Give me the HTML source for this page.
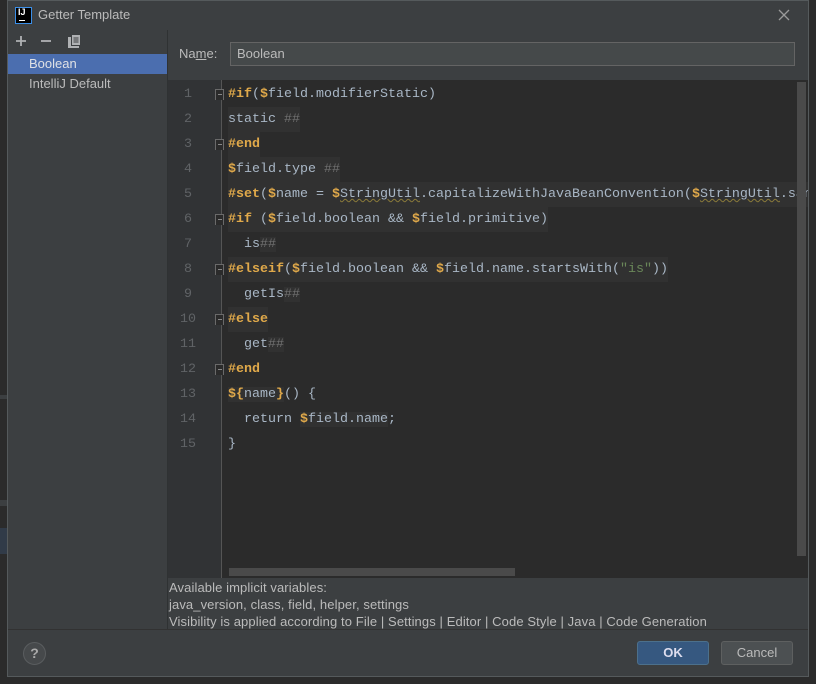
<!DOCTYPE html>
<html><head><meta charset="utf-8"><style>
*{margin:0;padding:0;box-sizing:border-box}
body{width:816px;height:684px;background:#2b2b2b;position:relative;overflow:hidden;font-family:"Liberation Sans",sans-serif;color:#bbbbbb}
.a{position:absolute}
.dlg{left:7px;top:0;width:802px;height:677px;background:#3c3f41;border:1px solid #555a5c}
.code{font-family:"Liberation Mono",monospace;font-size:13.33px;color:#a9b7c6;white-space:pre}
.ln{position:absolute;left:168px;width:40px;text-align:center;font-family:"Liberation Mono",monospace;font-size:13.33px;color:#606366;height:25px;line-height:25px}
.cl{position:absolute;left:228px;height:25px;line-height:25px}
.b{background:#313131}
.k{color:#e0a94a;font-weight:bold}
.d{color:#e0a94a;font-weight:bold}
.g{color:#707070}
.s{color:#6a8759}
.w{text-decoration:underline wavy #8a7a3a;text-decoration-thickness:1px}
.fold{position:absolute;left:215px;width:9px;height:11px;border:1px solid #6a6a6a;border-bottom:none;background:#2b2b2b}
.fold:after{content:"";position:absolute;left:2px;top:4px;width:4px;height:1px;background:#888}
.btn{position:absolute;top:641px;height:24px;width:72px;border-radius:3px;font-size:13px;text-align:center;line-height:22px}
</style></head><body>
<div class="a" style="left:0;top:395px;width:7px;height:4px;background:#3c3f41"></div>
<div class="a" style="left:0;top:500px;width:7px;height:6px;background:#3c3f41"></div>
<div class="a" style="left:0;top:528px;width:7px;height:26px;background:#313b48"></div>
<div class="a dlg"></div>
<!-- title -->
<div class="a" style="left:15px;top:7px;width:17px;height:17px;background:#000;border:1px solid #3b8fe8"></div>
<div class="a" style="left:18px;top:7px;font-size:9px;font-weight:bold;color:#fff">IJ</div>
<div class="a" style="left:19px;top:20px;width:6px;height:1px;background:#fff"></div>
<div class="a" style="left:38px;top:7px;font-size:13px;color:#bbbbbb">Getter Template</div>
<svg class="a" style="left:778px;top:9px" width="12" height="12"><path d="M1 1L11 11M11 1L1 11" stroke="#9a9a9a" stroke-width="1.3"/></svg>
<!-- left panel -->
<div class="a" style="left:167px;top:30px;width:1px;height:599px;background:#2f3233"></div>
<svg class="a" style="left:14px;top:34px" width="70" height="14"><path d="M2 7H12M7 2V12" stroke="#afb1b3" stroke-width="1.8"/><path d="M27 7H37" stroke="#afb1b3" stroke-width="1.8"/><path d="M54 3H57V12H65V14H54Z" fill="#afb1b3"/><rect x="58" y="1" width="8" height="10" fill="#afb1b3"/><path d="M59.5 4H64.5M59.5 6H64.5M59.5 8H64.5" stroke="#3c3f41"/></svg>
<div class="a" style="left:8px;top:54px;width:159px;height:20px;background:#4b6eaf"></div>
<div class="a" style="left:29px;top:56px;font-size:13px;color:#dfe1e5">Boolean</div>
<div class="a" style="left:29px;top:76px;font-size:13px;color:#bbbbbb">IntelliJ Default</div>
<!-- name -->
<div class="a" style="left:179px;top:46px;font-size:13px;color:#bbbbbb">Na<u>m</u>e:</div>
<div class="a" style="left:230px;top:42px;width:565px;height:24px;background:#45494a;border:1px solid #646464"></div>
<div class="a" style="left:237px;top:46px;font-size:13px;color:#bbbbbb">Boolean</div>
<!-- editor -->
<div class="a" style="left:168px;top:80px;width:640px;height:498px;background:#2b2b2b"></div>
<div class="a" style="left:168px;top:80px;width:53px;height:498px;background:#313335"></div>
<div class="a" style="left:221px;top:80px;width:1px;height:498px;background:#555"></div>

<div class="ln" style="top:82px">1</div><div class="ln" style="top:107px">2</div><div class="ln" style="top:132px">3</div><div class="ln" style="top:157px">4</div><div class="ln" style="top:182px">5</div><div class="ln" style="top:207px">6</div><div class="ln" style="top:232px">7</div><div class="ln" style="top:257px">8</div><div class="ln" style="top:282px">9</div><div class="ln" style="top:307px">10</div><div class="ln" style="top:332px">11</div><div class="ln" style="top:357px">12</div><div class="ln" style="top:382px">13</div><div class="ln" style="top:407px">14</div><div class="ln" style="top:432px">15</div>

<div class="fold" style="top:89px"></div><div class="fold" style="top:139px"></div><div class="fold" style="top:214px"></div><div class="fold" style="top:264px"></div><div class="fold" style="top:314px"></div><div class="fold" style="top:364px"></div>

<div class="code">
<div class="cl" style="top:82px"><span class="d">#if</span>(<span class="k">$</span>field.modifierStatic)</div>
<div class="cl b" style="top:107px">static <span class="g">##</span></div>
<div class="cl b" style="top:132px"><span class="d">#end</span></div>
<div class="cl b" style="top:157px"><span class="k">$</span>field.type <span class="g">##</span></div>
<div class="cl b" style="top:182px;width:580px;overflow:hidden"><span class="d">#set</span>(<span class="k">$</span>name = <span class="k">$</span><span class="w">StringUtil</span>.capitalizeWithJavaBeanConvention(<span class="k">$</span><span class="w">StringUtil</span>.sanitizeJavaIdentifier</div>
<div class="cl b" style="top:207px"><span class="d">#if</span> (<span class="k">$</span>field.boolean &amp;&amp; <span class="k">$</span>field.primitive)</div>
<div class="cl" style="top:232px">  is<span class="g b">##</span></div>
<div class="cl b" style="top:257px"><span class="d">#elseif</span>(<span class="k">$</span>field.boolean &amp;&amp; <span class="k">$</span>field.name.startsWith(<span class="s">"is"</span>))</div>
<div class="cl" style="top:282px">  getIs<span class="g b">##</span></div>
<div class="cl b" style="top:307px"><span class="d">#else</span></div>
<div class="cl" style="top:332px">  get<span class="g b">##</span></div>
<div class="cl" style="top:357px"><span class="d">#end</span></div>
<div class="cl" style="top:382px"><span class="b"><span class="k">${</span>name<span class="k">}</span></span>() {</div>
<div class="cl" style="top:407px">  return <span class="b"><span class="k">$</span>field.name</span>;</div>
<div class="cl" style="top:432px">}</div>
</div>
<div class="a" style="left:797px;top:82px;width:9px;height:474px;background:#4a4a4a"></div>
<div class="a" style="left:229px;top:568px;width:286px;height:8px;background:#4a4a4a"></div>
<!-- info -->
<div class="a" style="left:169px;top:579px;font-size:13px;line-height:17px;color:#bbbbbb;letter-spacing:0.1px">Available implicit variables:<br>java_version, class, field, helper, settings<br>Visibility is applied according to File | Settings | Editor | Code Style | Java | Code Generation</div>
<div class="a" style="left:8px;top:629px;width:800px;height:1px;background:#323232"></div>
<div class="a" style="left:23px;top:642px;width:23px;height:23px;border-radius:50%;background:#46494b;border:1px solid #5a5d5f;color:#aaa;font-size:14px;font-weight:bold;text-align:center;line-height:21px">?</div>
<div class="btn" style="left:637px;background:#365880;border:1px solid #4c708c;color:#dde;font-weight:bold">OK</div>
<div class="btn" style="left:721px;background:#4c5052;border:1px solid #5e6060;color:#bbbbbb">Cancel</div>
</body></html>
